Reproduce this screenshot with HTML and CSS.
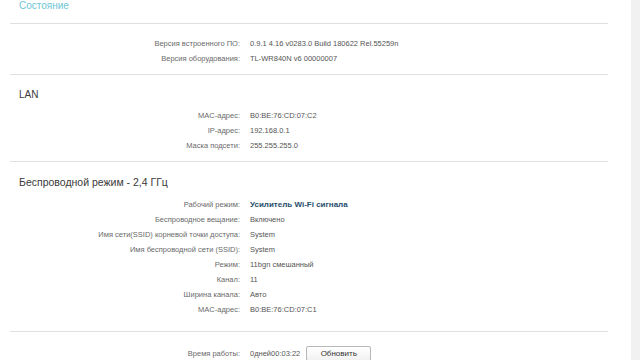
FILE: index.html
```html
<!DOCTYPE html>
<html lang="ru">
<head>
<meta charset="utf-8">
<link rel="stylesheet" href="styles.css">
</head>
<body>
<div class="page">
  <main class="content">
    <div class="section top">
      <div class="page-title">Состояние</div>
    </div>
    <div class="section info">
      <div class="rows">
        <div class="row"><span class="lbl">Версия встроенного ПО:</span><span class="val">0.9.1 4.16 v0283.0 Build 180622 Rel.55259n</span></div>
        <div class="row"><span class="lbl">Версия оборудования:</span><span class="val">TL-WR840N v6 00000007</span></div>
      </div>
    </div>
    <div class="section lan">
      <div class="sec-head">LAN</div>
      <div class="rows">
        <div class="row"><span class="lbl">MAC-адрес:</span><span class="val">B0:BE:76:CD:07:C2</span></div>
        <div class="row"><span class="lbl">IP-адрес:</span><span class="val">192.168.0.1</span></div>
        <div class="row"><span class="lbl">Маска подсети:</span><span class="val">255.255.255.0</span></div>
      </div>
    </div>
    <div class="section wifi">
      <div class="sec-head">Беспроводной режим - 2,4 ГГц</div>
      <div class="rows">
        <div class="row"><span class="lbl">Рабочий режим:</span><span class="val strong">Усилитель Wi-Fi сигнала</span></div>
        <div class="row"><span class="lbl">Беспроводное вещание:</span><span class="val">Включено</span></div>
        <div class="row"><span class="lbl">Имя сети(SSID) корневой точки доступа:</span><span class="val">System</span></div>
        <div class="row"><span class="lbl">Имя беспроводной сети (SSID):</span><span class="val">System</span></div>
        <div class="row"><span class="lbl">Режим:</span><span class="val">11bgn смешанный</span></div>
        <div class="row"><span class="lbl">Канал:</span><span class="val">11</span></div>
        <div class="row"><span class="lbl">Ширина канала:</span><span class="val">Авто</span></div>
        <div class="row"><span class="lbl">MAC-адрес:</span><span class="val">B0:BE:76:CD:07:C1</span></div>
      </div>
    </div>
    <div class="uptime">
      <div class="row"><span class="lbl">Время работы:</span><span class="val uptime-val">0дней00:03:22 <button class="btn" type="button">Обновить</button></span></div>
    </div>
  </main>
  <aside class="side"></aside>
</div>
</body>
</html>
```

FILE: styles.css
```css
html, body {
  margin: 0;
  padding: 0;
  background: #ffffff;
}
body {
  font-family: "Liberation Sans", Arial, sans-serif;
  font-size: 7.5px;
  color: #555;
}
.page {
  display: flex;
  width: 640px;
  height: 360px;
  overflow: hidden;
}
.content {
  width: 631px;
  flex: none;
}
.side {
  flex: 1;
  background: #f1f1f1;
}
.section {
  margin-left: 10px;
  width: 598px;
  border-bottom: 1px solid #e0e0e0;
}
.page-title {
  padding-left: 9px;
  font-size: 10px;
  line-height: 12px;
  height: 23px;
  color: #6cc6d6;
}
.info { padding: 12px 0 8px; }
.lan { padding: 12px 0 8px; }
.wifi { padding: 12px 0 14px; }
.sec-head {
  padding-left: 9px;
  font-size: 10.5px;
  line-height: 16px;
  color: #3a3a3a;
  margin-bottom: 5px;
}
.lan .sec-head { font-size: 10px; }
.wifi .sec-head { margin-bottom: 7px; }
.row {
  display: grid;
  grid-template-columns: 230px 1fr;
  column-gap: 10px;
  height: 15px;
  line-height: 15px;
  white-space: nowrap;
}
.lbl {
  text-align: right;
  color: #6a6a6a;
}
.val { color: #555; }
.val.strong {
  font-size: 8px;
  font-weight: bold;
  color: #1f4d6b;
}
.uptime {
  margin-left: 10px;
  padding-top: 14px;
}
.uptime-val {
  display: flex;
  align-items: center;
  gap: 6px;
}
.btn {
  width: 65px;
  height: 15px;
  padding: 0;
  margin: 0;
  font-family: "Liberation Sans", Arial, sans-serif;
  font-size: 8px;
  color: #333;
  background: linear-gradient(#ffffff, #f2f2f2);
  border: 1px solid #b8b8b8;
  border-radius: 2px;
}
```
